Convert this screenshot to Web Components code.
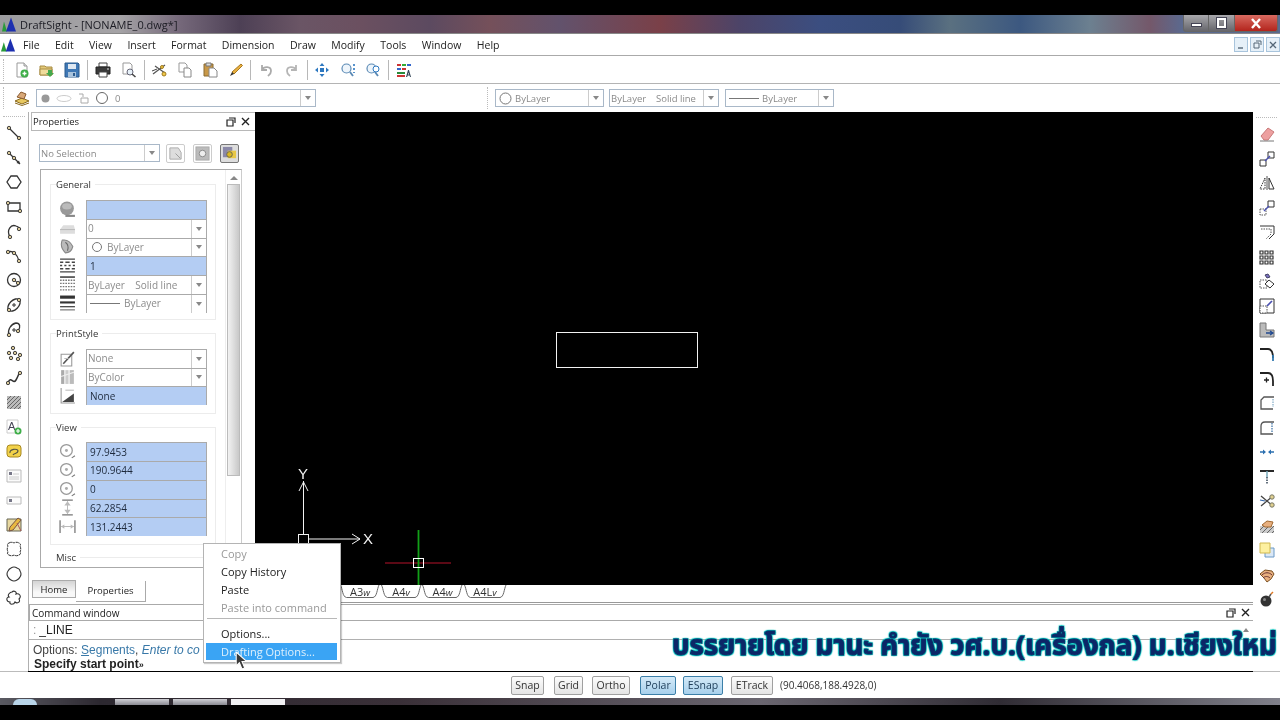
<!DOCTYPE html>
<html>
<head>
<meta charset="utf-8">
<title>DraftSight</title>
<style>
  html, body { margin: 0; padding: 0; background: #000; width: 1280px; height: 720px; overflow: hidden; }
  body { font-family: "Open Sans", "Noto Sans", sans-serif; font-size: 11px; }
</style>
</head>
<body>
<ds-app></ds-app>
<script>
const N = (x, y, c) => `<circle cx="${x}" cy="${y}" r="1.7" fill="${c || '#d8c89a'}" stroke="#333" stroke-width=".9"/>`;
const ICONS = {
  /* top toolbar */
  newdoc: `<path d="M3 1h7l3 3v11H3z" fill="#fff" stroke="#9a9a9a"/><path d="M10 1v3h3" fill="#ddd" stroke="#9a9a9a"/><circle cx="10.5" cy="11.5" r="4" fill="#3fae49"/><path d="M8.5 11.5h4M10.500 9.500v4" stroke="#fff" stroke-width="1.4"/>`,
  open: `<path d="M1 4h5l1 1h6v8H1z" fill="#e3c878" stroke="#a88d45"/><path d="M1 7h12v6H1z" fill="#f0dc9c" stroke="#a88d45"/><path d="M9 8h4v3h2l-4 4-4-4h2z" fill="#45a84d"/>`,
  save: `<path d="M1 1h13l1 1v13H1z" fill="#3f78b5" stroke="#2b5a8e"/><path d="M4 2h8v5H4z" fill="#dfe8f2"/><path d="M4 10h8v5H4z" fill="#a9c3dc"/><path d="M9 11h2v3H9z" fill="#2b5a8e"/>`,
  print: `<path d="M4 1h8v4H4z" fill="#fff" stroke="#444"/><path d="M1 5h14v7H1z" fill="#3a3a3a" stroke="#222"/><path d="M4 10h8v5H4z" fill="#fff" stroke="#444"/><path d="M12 7h2" stroke="#ddd"/>`,
  preview: `<path d="M2 1h7l2 2v9H2z" fill="#fff" stroke="#999"/><circle cx="9" cy="10" r="3" fill="#e6f0f8" stroke="#667"/><path d="M11 12l3.500 3" stroke="#444" stroke-width="1.600"/>`,
  cut: `<path d="M2 12L14 3M4 4l10 7" stroke="#555" stroke-width="1.200"/><circle cx="13" cy="12" r="2" fill="#f0c848" stroke="#a07c20"/><circle cx="11" cy="5" r="1.500" fill="#f0c848" stroke="#a07c20"/><path d="M1 9l5-2" stroke="#444"/>`,
  copy: `<path d="M2 1h6l2 2v7H2z" fill="#fff" stroke="#999"/><path d="M7 6h5l2 2v7H7z" fill="#fff" stroke="#888"/>`,
  paste: `<path d="M2 2h9v12H2z" fill="#c89848" stroke="#8a6a30"/><path d="M4 1h5v3H4z" fill="#ddd" stroke="#777"/><path d="M7 6h5l3 3v6H7z" fill="#fff" stroke="#888"/>`,
  brush: `<path d="M13 2l1.500 1.500L6 12l-2-2z" fill="#e8b040" stroke="#a87820"/><path d="M4 10l2 2-4 2z" fill="#333"/>`,
  undo: `<path d="M4 3v5h5M4 8c2-4 9-4 9 1 0 3-2 4-3 5" fill="none" stroke="#aaa" stroke-width="1.800"/>`,
  redo: `<path d="M12 3v5H7M12 8c-2-4-9-4-9 1 0 3 2 4 3 5" fill="none" stroke="#b5b5b5" stroke-width="1.800"/>`,
  pan: `<path d="M8 1l2.500 3h-5zM8 15l2.500-3h-5zM1 8l3-2.500v5zM15 8l-3-2.500v5z" fill="#2d78c0"/><path d="M6 6h4v4H6z" fill="#2d78c0"/>`,
  zoomext: `<circle cx="6.500" cy="6.500" r="4.500" fill="#eef5fb" stroke="#5b8ab5" stroke-width="1.200"/><path d="M10 10l3 4" stroke="#5b8ab5" stroke-width="1.800"/><path d="M14 2v2M14 6v2M14 10v1" stroke="#2d78c0" stroke-width="1.600"/>`,
  zoomwin: `<circle cx="6.500" cy="6.500" r="4.500" fill="#eef5fb" stroke="#5b8ab5" stroke-width="1.200"/><path d="M10 10l3 4" stroke="#5b8ab5" stroke-width="1.800"/><circle cx="11" cy="7" r="3" fill="#fff" stroke="#2d78c0"/>`,
  chart: `<path d="M1 2h4v2H1z" fill="#c33"/><path d="M6 2h4v2H6z" fill="#3a3"/><path d="M11 2h4v2h-4z" fill="#36c"/><path d="M1 6h4v2H1z" fill="#36c"/><path d="M6 6h4v2H6z" fill="#c33"/><path d="M1 10h8v2H1z" fill="#2a8a3a"/><path d="M1 13h8v2H1z" fill="#c33"/><path d="M12 8l-2 7h1.200l.4-1.500h2l.4 1.500H15l-2-7zm0 4.500l.6-2 .6 2z" fill="#345"/>`,
  layer: `<path d="M1 11l7-3 7 3-7 3z" fill="#e8c860" stroke="#8a6a20"/><path d="M1 13l7 2.500 7-2.500" fill="none" stroke="#8a6a20"/><path d="M3 7l4-5 5 2-2 5z" fill="#d8a878" stroke="#8a5a30"/>`,
  /* left toolbar */
  line: `<path d="M3 3l10 10" stroke="#333" stroke-width="1.300"/>${N(3, 3)}${N(13, 13)}`,
  pline: `<path d="M2 2l12 12" stroke="#333" stroke-width="1.300"/><path d="M14 14l-3.500-1 2.500-2.500z" fill="#333"/>${N(3, 3)}${N(8, 8)}`,
  hex: `<path d="M5 2h6l4 6-4 6H5L1 8z" fill="#fff" stroke="#333" stroke-width="1.300"/>`,
  rect: `<path d="M2 4h12v8H2z" fill="#fff" stroke="#333" stroke-width="1.300"/>${N(2, 4)}${N(14, 12)}`,
  arc: `<path d="M4 14C0 7 5 1 10 3c3 1 4 3 4 4" fill="none" stroke="#333" stroke-width="1.300"/>${N(4, 14)}${N(13, 6)}`,
  arc2: `<path d="M2 4c5-2 9 2 11 9" fill="none" stroke="#333" stroke-width="1.300"/>${N(2, 4)}${N(8, 5)}${N(13, 13)}`,
  circle: `<circle cx="8" cy="8" r="6.500" fill="#fff" stroke="#333" stroke-width="1.300"/><path d="M8 8l4 3" stroke="#333"/>${N(8, 8)}${N(12, 11)}`,
  ellipse: `<ellipse cx="8" cy="8" rx="7.500" ry="4.500" transform="rotate(-45 8 8)" fill="#fff" stroke="#333" stroke-width="1.300"/><path d="M6 8h4M8 6v4" stroke="#333"/>${N(13, 3)}${N(3, 13)}`,
  ellarc: `<path d="M3 14C1 9 5 3 10 2c4 0 5 4 2 8" fill="none" stroke="#333" stroke-width="1.300"/><path d="M6 9h4M8 7v4" stroke="#333"/>${N(3, 14)}${N(12, 10)}`,
  points: `${N(7, 3)}${N(3, 8)}${N(9, 8)}${N(14, 10)}${N(5, 13)}${N(12, 14)}`,
  spline: `<path d="M2 13c3-8 5 2 8-3s2-6 4-7" fill="none" stroke="#333" stroke-width="1.500"/>${N(2, 13)}${N(14, 3)}`,
  hatch: `<path d="M1 2h14v13H1z" fill="#bbb"/><path d="M1 6l4-4M1 10l8-8M1 14L13 2M4 15L15 4M8 15l7-7M12 15l3-3" stroke="#666"/>`,
  textadd: `<path d="M1 1h11v13H1z" fill="#fff" stroke="#ccc"/><text x="2" y="11" font-family="Liberation Sans" font-size="11" fill="#445">A</text><circle cx="12" cy="12" r="3.500" fill="#3fae49"/><path d="M10 12h4M12 10v4" stroke="#fff" stroke-width="1.200"/>`,
  region: `<rect x="1" y="2" width="14" height="12" rx="3" fill="#f2d24a" stroke="#a88820"/><path d="M4 10c-1-4 8-5 8-2s-4 2-5 4" fill="none" stroke="#554" stroke-width="1.200"/>`,
  note: `<path d="M1 2h14v12H1z" fill="#fbfbfb" stroke="#bbb"/><path d="M3 4h3v3H3z" fill="#778"/><path d="M7 6h6M3 9h10M3 11h10" stroke="#ccc"/>`,
  note2: `<path d="M1 5h14v7H1z" fill="#fbfbfb" stroke="#bbb"/><path d="M3 7h3v3H3z" fill="#778"/>`,
  editimg: `<path d="M1 2h14v12H1z" fill="#e8d8a0" stroke="#665"/><path d="M12 1l3 2-8 10-4 1 1-4z" fill="#e8b840" stroke="#754"/><path d="M11 6l4 8" stroke="#a55"/>`,
  cloudrect: `<path d="M3 2q2.500-1.500 5 0q2.500-1.500 5 0q2.500 1 1 3q1.500 3 0 6q1.500 2-1 3q-2.500 1.500-5 0q-2.500 1.500-5 0q-2.500-1-1-3q-1.500-3 0-6q-1.500-2 1-3z" fill="#fff" stroke="#333" stroke-dasharray="3 .6"/>`,
  cloudcirc: `<path d="M5 2q3-2 6 0q3 1 3 3q2 3 0 6q-1 2-3 3q-3 2-6 0q-2-1-3-3q-2-3 0-6q1-2 3-3z" fill="#fff" stroke="#333" stroke-width="1.100"/>`,
  cloud: `<path d="M6 2c2-2 5 0 4 2 3-1 6 2 3 5 2 3-2 5-4 3-1 3-6 3-5 0-4 0-4-5-1-5-2-2 1-5 3-5z" fill="#fff" stroke="#333" stroke-width="1.100"/>`,
  /* right toolbar */
  eraser: `<path d="M2 10l7-8 6 4-6 8H5z" fill="#eda0a0" stroke="#c87878"/><path d="M1 15h14" stroke="#777"/>`,
  rcopy: `<path d="M1 9h6v6H1z" fill="#fff" stroke="#333"/><path d="M9 1h6v6H9z" fill="#fff" stroke="#333"/><path d="M6 10l5-5" stroke="#4a50b0" stroke-width="1.500"/>`,
  mirror: `<path d="M6 3L1 14h5z" fill="#fff" stroke="#333" stroke-dasharray="1.500 1"/><path d="M10 3l5 11h-5z" fill="#fff" stroke="#333"/><path d="M8 1v14" stroke="#555"/>`,
  move: `<path d="M1 9h6v6H1z" fill="#fff" stroke="#555" stroke-dasharray="1.500 1"/><path d="M9 1h6v6H9z" fill="#fff" stroke="#333"/><path d="M5 11l5-5" stroke="#4a50b0" stroke-width="1.500"/>`,
  offset: `<path d="M1 2h14v8l-5 5" fill="none" stroke="#333"/><path d="M2 5h10v5l-5 5" fill="none" stroke="#555" stroke-dasharray="1.500 1"/>`,
  array: `<path d="M1 2h3v3H1zM6 2h3v3H6zM11 2h3v3h-3zM1 7h3v3H1zM6 7h3v3H6zM11 7h3v3h-3zM1 12h3v3H1zM6 12h3v3H6zM11 12h3v3h-3z" fill="#fff" stroke="#333" stroke-width="1.200"/>`,
  rotate: `<path d="M1 7h7v8H1z" fill="#fff" stroke="#555" stroke-dasharray="1.500 1"/><path d="M10 7l5 4-4 4-5-4z" fill="#fff" stroke="#333"/><path d="M6 2l3-1 2 3-3 1z" fill="#7a70c0" stroke="#446"/>`,
  scale: `<path d="M1 1h14v14H1z" fill="#fff" stroke="#333"/><path d="M1 8h7v7H1z" fill="#fff" stroke="#555" stroke-dasharray="1.500 1"/><path d="M8 8l5-5" stroke="#4a50b0" stroke-width="1.700"/>`,
  stretch: `<path d="M1 1h6v7h8v7H1z" fill="#bbb" stroke="#777"/><path d="M7 11h6M11 9l3 2-3 2" fill="none" stroke="#224a90" stroke-width="1.300"/>`,
  trimline: `<path d="M1 3h8c4 0 5 3 5 9" fill="none" stroke="#222" stroke-width="1.800"/><path d="M14 9v6" stroke="#347ab0" stroke-width="1.800"/>`,
  extend: `<path d="M1 2h8c4 0 5 3 5 8" fill="none" stroke="#222" stroke-width="1.800"/><path d="M14 10v5" stroke="#222" stroke-width="1.800"/><path d="M5 9h5M7.500 6.500v5" stroke="#222" stroke-width="1.300"/>`,
  chamfer: `<path d="M15 2H5L2 5v9h12" fill="none" stroke="#555" stroke-width="1.300"/><path d="M14 4v8" stroke="#69b" stroke-dasharray="1.500 1"/>`,
  fillet: `<path d="M15 2H6C3 2 2 4 2 6v8h12" fill="none" stroke="#555" stroke-width="1.300"/><path d="M13 3v10" stroke="#47a" stroke-width="1.300" stroke-dasharray="1.500 1"/>`,
  join: `<path d="M1 8h5M15 8h-5" stroke="#2d70b0" stroke-width="1.500"/><path d="M7 8L4 5.500v5zM9 8l3-2.500v5z" fill="#2d70b0"/>`,
  tline: `<path d="M1 2h14" stroke="#111" stroke-width="1.800"/><path d="M8 2v6" stroke="#7ab" stroke-width="1.500"/><path d="M8 8v7" stroke="#345" stroke-width="1.500" stroke-dasharray="1.500 1"/>`,
  rscissor: `<path d="M2 3l12 10M2 13L14 3" stroke="#444" stroke-width="1.300"/><circle cx="13" cy="4" r="2.200" fill="#e0d090" stroke="#776"/><circle cx="13" cy="12" r="2.200" fill="#e0d090" stroke="#776"/><path d="M1 7l5 1" stroke="#36a" stroke-width="1.200"/>`,
  hatchhand: `<path d="M1 8h14v7H1z" fill="#ccc"/><path d="M1 12l4-4M3 15l7-7M8 15l7-7M13 15l2-2" stroke="#666"/><path d="M3 7l5-4 6 1-2 5H6z" fill="#e8b080" stroke="#a06830"/>`,
  squares: `<path d="M6 6h9v9H6z" fill="#dbe8f6" stroke="#6a9ac8"/><path d="M1 1h10v10H1z" fill="#fdf0a0" stroke="#d0b850"/>`,
  hand: `<path d="M1 7l5-4 7 1 2 3-3 5-4 3-3-4z" fill="#e8b080" stroke="#7a5020"/><path d="M3 8c3-3 7-3 10 0M4 11c2-2 5-2 7 0" fill="none" stroke="#633"/>`,
  bomb: `<circle cx="7" cy="10" r="5.500" fill="#333"/><circle cx="5.500" cy="8.500" r="1.500" fill="#888"/><path d="M10 6l2-3" stroke="#555" stroke-width="1.500"/><path d="M12 3l2-2" stroke="#e07820" stroke-width="1.500"/>`,
  /* properties */
  sel1: `<path d="M2 2h9l3 5v7H2z" fill="#ddd" stroke="#aaa"/><path d="M8 8l5 5" stroke="#999"/>`,
  sel2: `<rect x="1" y="1" width="14" height="14" fill="#bbb" stroke="#aaa"/><circle cx="8" cy="8" r="3.500" fill="#eee" stroke="#888"/>`,
  sel3: `<path d="M1 1h10v11H1z" fill="#8a88a8"/><path d="M6 5h9v8H6z" fill="#e8c848"/><circle cx="8" cy="9" r="3" fill="#dcb820" stroke="#665"/>`,
  color: `<circle cx="7.500" cy="7" r="6.500" fill="#999"/><ellipse cx="7.500" cy="5" rx="4.500" ry="3" fill="#bbb"/><path d="M6 13h9v2H6z" fill="#888"/>`,
  plane: `<path d="M1 9l3-4h10l1 4v4H1z" fill="#ddd"/><path d="M1 9h14" stroke="#bbb"/>`,
  swirl: `<path d="M3 2c5-1 8 2 10 6-1 4-4 6-7 6C3 11 1 7 3 2z" fill="#bbb" stroke="#888"/><path d="M6 4c3 2 3 5 2 8" fill="none" stroke="#666"/>`,
  scale2: `<path d="M1 2h14M1 5h3M6 5h4M12 5h3M1 8h2M5 8h2M9 8h2M13 8h2M1 11h3M6 11h4M12 11h3M1 14h14" stroke="#444" stroke-width="1.300"/>`,
  ltype: `<path d="M1 1h14" stroke="#444" stroke-width="1.500"/><path d="M1 4h14M1 7h14M1 10h14M1 13h14" stroke="#777" stroke-dasharray="1.500 1" stroke-width="1.200"/>`,
  lweight: `<path d="M1 2h14" stroke="#333" stroke-width="3"/><path d="M1 7h14" stroke="#333" stroke-width="2"/><path d="M1 11h14" stroke="#444" stroke-width="1.200"/><path d="M1 14h14" stroke="#666"/>`,
  pnone: `<path d="M2 4h10v11H2z" fill="#fff" stroke="#999"/><path d="M4 13L14 2" stroke="#555" stroke-width="1.500"/><path d="M5 8h4" stroke="#bbb"/>`,
  pcolor: `<path d="M2 2h3v13H2z" fill="#aaa"/><path d="M6 2h3v13H6z" fill="#ccc"/><path d="M10 2h4v13h-4z" fill="#bbb"/><path d="M2 8l12-4" stroke="#eee"/>`,
  pramp: `<path d="M2 1v14h13" fill="none" stroke="#999"/><path d="M3 14l11-8v8z" fill="#444"/><path d="M6 3l8 0" stroke="#bbb"/>`,
  vx: `<circle cx="7" cy="7" r="5.500" fill="#fff" stroke="#999" stroke-width="1.200"/><circle cx="7" cy="7" r="1.400" fill="#aaa"/><path d="M12 14l3-2" stroke="#777"/>`,
  vh: `<path d="M3 1h10M3 15h10" stroke="#777" stroke-width="1.200"/><path d="M8 2v12" stroke="#bbb"/><path d="M8 2l-3 4h6zM8 14l-3-4h6z" fill="#bbb"/>`,
  vw: `<path d="M1 2v12M15 2v12" stroke="#777" stroke-width="1.200"/><path d="M2 8h12" stroke="#bbb"/><path d="M2 8l3-2v4zM14 8l-3-2v4z" fill="#bbb"/>`
};

class DsIcon extends HTMLElement {
  constructor() {
    super();
    this.attachShadow({ mode: "open" });
  }
  connectedCallback() {
    const s = this.getAttribute("size") || 16;
    this.shadowRoot.innerHTML = `
      <style>
        :host { display: inline-flex; align-items: center; justify-content: center; }
        svg { display: block; }
      </style>
      <svg width="${s}" height="${s}" viewBox="0 0 16 16">${ICONS[this.getAttribute("name")] || ""}</svg>
    `;
  }
}
customElements.define("ds-icon", DsIcon);

class DsTitle extends HTMLElement {
  constructor() {
    super();
    this.attachShadow({ mode: "open" });
  }
  connectedCallback() {
    this.shadowRoot.innerHTML = `
      <style>
        :host {
          display: flex; align-items: center; height: 19px; box-sizing: border-box;
          background: linear-gradient(90deg, #9c9c9f 0, #a5a3a6 120px, #75687a 180px, #4d4055 240px, #6a5565 300px, #6b5060 360px, #5c4a60 430px, #75505a 490px, #62526c 560px, #7a4048 660px, #4c4468 740px, #3b4e80 820px, #364c78 900px, #5a7080 950px, #3c5880 1020px, #6c8090 1090px, #74586a 1150px, #5a6a90 1184px);
          border-bottom: 1px solid #888;
          color: #222; font-size: 11px;
        }
        .logo { margin: 0 3px 0 1px; }
        .name { flex: 1; color: #1c1c24; }
        .wb { display: flex; height: 17px; align-self: flex-start; margin-right: 2px; }
        .wb div { display: flex; align-items: center; justify-content: center; height: 17px; border: 1px solid #666; border-top: 0; box-sizing: border-box; background: linear-gradient(#a8a8ac, #66666c); }
        .min { width: 26px; border-radius: 0 0 0 3px; }
        .max { width: 26px; border-left: 0 !important; }
        .cls { width: 43px; border-left: 0 !important; background: linear-gradient(#d86a60, #b3241c) !important; border-radius: 0 0 3px 0; }
        .min i { display: block; width: 9px; height: 2px; background: #fff; border: 1px solid #445; box-sizing: content-box; margin-top: 4px; }
        .max i { display: block; width: 5px; height: 6px; border: 2px solid #fff; outline: 1px solid #445; }
        .cls svg { display: block; }
      </style>
      <svg class="logo" width="16" height="17" viewBox="0 0 16 16"><path d="M1 15L3 5l3 10z" fill="#2a9a3a"/><path d="M5 15l5-14 5 14z" fill="#1c2fb0"/></svg>
      <span class="name"><slot></slot></span>
      <div class="wb">
        <div class="min"><i></i></div>
        <div class="max"><i></i></div>
        <div class="cls"><svg width="12" height="11" viewBox="0 0 12 11"><path d="M2 1l8 9M10 1l-8 9" stroke="#fff" stroke-width="2.400"/></svg></div>
      </div>
    `;
  }
}
customElements.define("ds-title", DsTitle);

class DsMenubar extends HTMLElement {
  constructor() {
    super();
    this.attachShadow({ mode: "open" });
  }
  connectedCallback() {
    const items = ["File", "Edit", "View", "Insert", "Format", "Dimension", "Draw", "Modify", "Tools", "Window", "Help"];
    this.shadowRoot.innerHTML = `
      <style>
        :host {
          display: flex; align-items: center; height: 22px; box-sizing: border-box;
          background: #fff; border-bottom: 1px solid #aaa; color: #222; font-size: 10.500px;
        }
        .logo { margin: 0 7px 0 1px; }
        .items { display: flex; gap: 15.400px; flex: 1; }
        .mdi { display: flex; gap: 2px; align-self: flex-start; margin-top: 3px; }
        .mdi div { display: flex; align-items: center; justify-content: center; width: 14px; height: 15px; background: #e6f0f8; border: 1px solid #a8c4dc; box-sizing: border-box; }
      </style>
      <svg class="logo" width="15" height="16" viewBox="0 0 16 16"><path d="M0 15L3 5l3 10z" fill="#2a9a3a"/><path d="M5 15l5-14 5 14z" fill="#1c2fb0"/></svg>
      <div class="items">${items.map(m => `<span>${m}</span>`).join("")}</div>
      <div class="mdi">
        <div><svg width="8" height="8" viewBox="0 0 8 8"><path d="M1 7h5" stroke="#567" stroke-width="1.400"/></svg></div>
        <div><svg width="9" height="9" viewBox="0 0 9 9"><path d="M3 1h5v4M1 3h5v5H1z" fill="none" stroke="#567"/></svg></div>
        <div><svg width="8" height="8" viewBox="0 0 8 8"><path d="M1 1l6 6M7 1L1 7" stroke="#567" stroke-width="1.300"/></svg></div>
      </div>
    `;
  }
}
customElements.define("ds-menubar", DsMenubar);

class DsToolbar extends HTMLElement {
  constructor() {
    super();
    this.attachShadow({ mode: "open" });
  }
  connectedCallback() {
    const groups = this.getAttribute("icons").split("|").map(g => g.split(","));
    this.shadowRoot.innerHTML = `
      <style>
        :host {
          display: flex; align-items: center; height: 28px; box-sizing: border-box; padding-left: 3px;
          background: #fff; border-bottom: 1px solid #b4b4b4;
        }
        .grip { width: 1px; height: 22px; border-left: 1px dotted #bbb; margin-right: 4px; }
        .b { width: 25.400px; display: flex; justify-content: center; }
        .sep { width: 1px; height: 20px; background: #b8b8b8; margin: 0 2.200px; }
      </style>
      <div class="grip"></div>
      ${groups.map(g => g.map(i => `<div class="b"><ds-icon name="${i}"></ds-icon></div>`).join("")).join(`<div class="sep"></div>`)}
    `;
  }
}
customElements.define("ds-toolbar", DsToolbar);

class DsCombo extends HTMLElement {
  constructor() {
    super();
    this.attachShadow({ mode: "open" });
  }
  connectedCallback() {
    this.shadowRoot.innerHTML = `
      <style>
        :host {
          display: flex; align-items: center; box-sizing: border-box; height: 18px;
          background: #fff; border: 1px solid #a9b8c8; color: #8a8a8a; font-size: 9.500px; white-space: nowrap; overflow: hidden;
        }
        .v { flex: 1; display: flex; align-items: center; gap: var(--g, 5px); padding-left: var(--p, 3px); overflow: hidden; }
        .a { width: 14px; align-self: stretch; border-left: 1px solid #ccc; display: flex; align-items: center; justify-content: center; }
        .a i { width: 0; height: 0; border: 3.500px solid transparent; border-top: 4px solid #888; border-bottom: 0; }
      </style>
      <div class="v"><slot></slot></div>
      <div class="a"><i></i></div>
    `;
  }
}
customElements.define("ds-combo", DsCombo);

class DsRow extends HTMLElement {
  constructor() {
    super();
    this.attachShadow({ mode: "open" });
  }
  connectedCallback() {
    const blue = this.hasAttribute("blue");
    this.shadowRoot.innerHTML = `
      <style>
        :host { display: flex; align-items: center; height: 18.800px; gap: 10px; padding-left: 7px; font-size: 10px; }
        .ic { width: 18px; display: flex; justify-content: center; }
        .f {
          width: 121px; height: 100%; box-sizing: border-box; display: flex; align-items: center;
          border: 1px solid #aaa; border-width: 1px 1px 0 1px; overflow: hidden; white-space: nowrap;
        }
        .f.blue { background: #b4cdf3; color: #1e2a3c; padding-left: 3px; }
        .f.white { background: #fff; color: #8c8c8c; padding-left: 1px; }
        .t { flex: 1; display: flex; align-items: center; gap: 4px; padding-bottom: 1px; }
        .a { width: 14px; align-self: stretch; border-left: 1px solid #ccc; display: flex; align-items: center; justify-content: center; }
        .a i { width: 0; height: 0; border: 3.500px solid transparent; border-top: 4px solid #888; border-bottom: 0; }
      </style>
      <div class="ic"><ds-icon name="${this.getAttribute("icon")}" size="17"></ds-icon></div>
      <div class="f ${blue ? "blue" : "white"}">
        <div class="t"><slot></slot></div>
        ${blue ? "" : `<div class="a"><i></i></div>`}
      </div>
    `;
  }
}
customElements.define("ds-row", DsRow);

class DsGroup extends HTMLElement {
  constructor() {
    super();
    this.attachShadow({ mode: "open" });
  }
  connectedCallback() {
    this.shadowRoot.innerHTML = `
      <style>
        :host {
          display: block; position: relative; box-sizing: border-box; width: 166px; margin-left: 9px;
          border: 1px solid #ececec; padding: 15px 0 7px;
        }
        .l { position: absolute; left: 5px; top: -7px; background: #fff; padding-right: 4px; font-size: 9.500px; line-height: 14px; color: #333; }
      </style>
      <span class="l">${this.getAttribute("label")}</span>
      <slot></slot>
    `;
  }
}
customElements.define("ds-group", DsGroup);

class DsProps extends HTMLElement {
  constructor() {
    super();
    this.attachShadow({ mode: "open" });
  }
  connectedCallback() {
    this.shadowRoot.innerHTML = `
      <style>
        :host { display: flex; flex-direction: column; height: 491px; box-sizing: border-box; background: #fff; border-left: 1px solid #b0b0b0; color: #222; }
        .head {
          display: flex; align-items: center; height: 19px; box-sizing: border-box; margin: 0 0 0 2px;
          border: 1px solid #b8b8b8; border-width: 1px 0 1px 1px; font-size: 9.500px; padding: 0 5px 0 1px;
        }
        .head span { flex: 1; }
        .head svg { margin-left: 5px; }
        .sel { display: flex; align-items: center; height: 18px; margin: 13px 0 7px 10px; }
        .sel ds-combo { width: 121px; margin-right: 6px; --p: 1px; }
        .tb { width: 19px; height: 19px; box-sizing: border-box; border: 1px solid #ccc; border-radius: 2px; margin-right: 8px; display: flex; align-items: center; justify-content: center; }
        .tb.on { background: #ddd; border-color: #777; }
        .box {
          display: flex; height: 399px; width: 202px; box-sizing: border-box; margin-left: 11px;
          border: 1px solid #aaa; border-right-color: #ccc; overflow: hidden;
        }
        .content { width: 185px; padding-top: 14px; display: flex; flex-direction: column; gap: 13px; }
        .sb { width: 15px; background: #fff; border-left: 1px solid #eee; display: flex; flex-direction: column; align-items: center; }
        .sb i { margin: 6px 0 4px; width: 0; height: 0; border: 4px solid transparent; border-bottom: 4px solid #888; border-top: 0; }
        .sb b { display: block; width: 13px; height: 292px; box-sizing: border-box; background: linear-gradient(90deg, #f2f2f2, #c8c8c8); border: 1px solid #bbb; }
        .misc { margin: -8px 0 0 9px; font-size: 9.500px; color: #333; height: 14px; display: flex; align-items: center; gap: 4px; padding-left: 6px; }
        .misc::after { content: ""; flex: 1; border-top: 1px solid #ececec; }
        .tabs { display: flex; margin: 12px 0 0 3px; height: 22px; align-items: flex-start; border-bottom: 0; }
        .tab { box-sizing: border-box; font-size: 9.500px; display: flex; align-items: center; justify-content: center; }
        .tab.home { width: 44px; height: 18px; border: 1px solid #aaa; background: linear-gradient(#d4d4d4, #f8f8f8 70%); }
        .tab.prop { width: 70px; height: 21px; border: 1px solid #aaa; border-width: 0 1px 1px 0; background: #fff; margin-top: 1px; padding-bottom: 2px; }
      </style>
      <div class="head">
        <span>Properties</span>
        <svg width="10" height="10" viewBox="0 0 10 10"><path d="M3 1h6v5M1 3h6v6H1z" fill="none" stroke="#222" stroke-width="1.200"/></svg>
        <svg width="9" height="9" viewBox="0 0 9 9"><path d="M1 1l7 7M8 1L1 8" stroke="#222" stroke-width="1.400"/></svg>
      </div>
      <div class="sel">
        <ds-combo>No Selection</ds-combo>
        <div class="tb"><ds-icon name="sel1" size="15"></ds-icon></div>
        <div class="tb"><ds-icon name="sel2" size="15"></ds-icon></div>
        <div class="tb on"><ds-icon name="sel3" size="15"></ds-icon></div>
      </div>
      <div class="box">
        <div class="content">
          <ds-group label="General" style="padding-bottom:6px">
            <ds-row blue icon="color"></ds-row>
            <ds-row icon="plane">0</ds-row>
            <ds-row icon="swirl"><svg width="12" height="12" style="margin-left:3px"><circle cx="6" cy="6" r="4.500" fill="none" stroke="#777"/></svg>ByLayer</ds-row>
            <ds-row blue icon="scale2">1</ds-row>
            <ds-row icon="ltype">ByLayer&nbsp;&nbsp;&nbsp;&nbsp;Solid line</ds-row>
            <ds-row icon="lweight"><span style="display:inline-block;width:30px;border-top:1px solid #777;margin-left:2px"></span>ByLayer</ds-row>
          </ds-group>
          <ds-group label="PrintStyle" style="padding-bottom:8px">
            <ds-row icon="pnone">None</ds-row>
            <ds-row icon="pcolor">ByColor</ds-row>
            <ds-row blue icon="pramp">None</ds-row>
          </ds-group>
          <ds-group label="View" style="padding:14px 0 8px">
            <ds-row blue icon="vx">97.9453</ds-row>
            <ds-row blue icon="vx">190.9644</ds-row>
            <ds-row blue icon="vx">0</ds-row>
            <ds-row blue icon="vh">62.2854</ds-row>
            <ds-row blue icon="vw">131.2443</ds-row>
          </ds-group>
          <div class="misc">Misc</div>
        </div>
        <div class="sb"><i></i><b></b></div>
      </div>
      <div class="tabs">
        <div class="tab home">Home</div>
        <div class="tab prop">Properties</div>
      </div>
    `;
  }
}
customElements.define("ds-props", DsProps);

class DsVbar extends HTMLElement {
  constructor() {
    super();
    this.attachShadow({ mode: "open" });
  }
  connectedCallback() {
    this.shadowRoot.innerHTML = `
      <style>
        :host { display: block; background: #fff; box-sizing: border-box; height: 560px; border-bottom: 1px solid #bbb; padding-top: ${this.getAttribute("top") || 9}px; }
        .g { border-top: 1px dotted #bbb; margin: -4px 3px 4px; }
        .b { height: 24.470px; display: flex; align-items: center; justify-content: center; }
      </style>
      <div class="g"></div>
      ${this.getAttribute("icons").split(",").map(i => `<div class="b"><ds-icon name="${i}"></ds-icon></div>`).join("")}
    `;
  }
}
customElements.define("ds-vbar", DsVbar);

class DsCanvas extends HTMLElement {
  constructor() {
    super();
    this.attachShadow({ mode: "open" });
  }
  connectedCallback() {
    const w = "#f2f2f2";
    this.shadowRoot.innerHTML = `
      <style>
        :host { display: block; background: #000; height: 473px; overflow: hidden; }
        svg { display: block; }
        text { font-family: "Liberation Sans", sans-serif; fill: ${w}; }
      </style>
      <svg width="998" height="473" viewBox="255 112 998 473">
        <rect x="556.500" y="332.500" width="141" height="35" fill="none" stroke="${w}"/>
        <path d="M303.500 534V481M299 491l4.500-9 4.500 9M309 539H360M352 534l8 5-8 5" fill="none" stroke="${w}"/>
        <rect x="298.500" y="534.500" width="10" height="10" fill="none" stroke="${w}"/>
        <text x="298" y="479" font-size="15" font-weight="100">Y</text>
        <text x="363" y="544" font-size="15" font-weight="100">X</text>
        <path d="M385 563h66" stroke="#7a0c1c" stroke-width="1.500"/>
        <path d="M418.500 530v55" stroke="#12a018" stroke-width="1.800"/>
        <rect x="413.500" y="558.500" width="10" height="9" fill="none" stroke="#fff"/>
      </svg>
    `;
  }
}
customElements.define("ds-canvas", DsCanvas);

class DsSheets extends HTMLElement {
  constructor() {
    super();
    this.attachShadow({ mode: "open" });
  }
  connectedCallback() {
    const tabs = [["A3", "w", 40], ["A4", "v", 41], ["A4", "w", 41], ["A4L", "v", 43]];
    this.shadowRoot.innerHTML = `
      <style>
        :host { display: flex; gap: .5px; height: 18px; box-sizing: border-box; background: #fff; border-bottom: 1px solid #999; padding-left: 85px; }
        .t { position: relative; height: 13px; display: flex; align-items: center; justify-content: center; font-size: 11px; color: #333; }
        .t svg { position: absolute; left: 0; top: 0; }
        .t span { position: relative; }
        .t i { font-size: 9.500px; }
      </style>
      ${tabs.map(t => `<div class="t" style="width:${t[2]}px">
        <svg width="${t[2]}" height="13"><path d="M0.500 0c2 4 2 12 6 12.500H${t[2] - 7}c4-.5 4-8.500 6-12.500" fill="none" stroke="#666"/></svg>
        <span>${t[0]}<i>${t[1]}</i></span></div>`).join("")}
    `;
  }
}
customElements.define("ds-sheets", DsSheets);

class DsCmd extends HTMLElement {
  constructor() {
    super();
    this.attachShadow({ mode: "open" });
  }
  connectedCallback() {
    this.shadowRoot.innerHTML = `
      <style>
        :host { display: block; height: 68px; box-sizing: border-box; background: #fff; border-left: 1px solid #b0b0b0; padding-top: 1px; color: #222; overflow: hidden; }
        .h { display: flex; align-items: center; height: 17px; box-sizing: border-box; border: 1px solid #aaa; border-width: 1px 0 1px 1px; font-size: 10px; padding: 0 3px 0 2px; }
        .h span { flex: 1; }
        .h svg { margin-left: 5px; }
        .in { display: flex; align-items: center; height: 19px; box-sizing: border-box; border-bottom: 1px solid #b0b0b0; font: 12px "Liberation Sans", sans-serif; padding: 0 4px; }
        .in span { flex: 1; }
        .in b { color: #999; font-weight: normal; margin-right: 3px; }
        .in i { width: 0; height: 0; border: 3px solid transparent; border-bottom: 4px solid #888; border-top: 0; }
        .o { font: 12px/14px "Liberation Sans", sans-serif; color: #444; padding: 3px 0 0 4px; white-space: nowrap; }
        .o u, .o em { color: #3878a8; }
        .o a { color: #3878a8; }
        .s { font: bold 12px/14px "Liberation Sans", sans-serif; color: #222; padding-left: 5px; white-space: nowrap; }
        .s small { font-size: 9px; }
      </style>
      <div class="h">
        <span>Command window</span>
        <svg width="10" height="10" viewBox="0 0 10 10"><path d="M3 1h6v5M1 3h6v6H1z" fill="none" stroke="#222" stroke-width="1.200"/></svg>
        <svg width="9" height="9" viewBox="0 0 9 9"><path d="M1 1l7 7M8 1L1 8" stroke="#222" stroke-width="1.400"/></svg>
      </div>
      <div class="in"><span><b>:</b>_LINE</span><i></i></div>
      <div class="o">Options: <a><u>S</u>egments</a>, <em>Enter to co</em></div>
      <div class="s">Specify start point<small>»</small></div>
    `;
  }
}
customElements.define("ds-cmd", DsCmd);

class DsBtn extends HTMLElement {
  constructor() {
    super();
    this.attachShadow({ mode: "open" });
  }
  connectedCallback() {
    this.shadowRoot.innerHTML = `
      <style>
        :host {
          display: flex; align-items: center; justify-content: center; height: 19px; box-sizing: border-box;
          border: 1px solid #a0a0a0; border-radius: 2px; font-size: 10.500px; color: #333;
          background: linear-gradient(#fdfdfd, #e4e4e4);
        }
        :host([on]) { background: linear-gradient(#d4eaf8, #a8d0ec); border-color: #3c7fa8; color: #1c3c58; }
      </style>
      <slot></slot>
    `;
  }
}
customElements.define("ds-btn", DsBtn);

class DsStatus extends HTMLElement {
  constructor() {
    super();
    this.attachShadow({ mode: "open" });
  }
  connectedCallback() {
    this.shadowRoot.innerHTML = `
      <style>
        :host { display: flex; align-items: center; height: 26px; box-sizing: border-box; background: #fff; padding-left: 511px; color: #333; font-size: 10px; }
        ds-btn:nth-of-type(1) { width: 33px; margin-right: 10px; }
        ds-btn:nth-of-type(2) { width: 29px; margin-right: 9px; }
        ds-btn:nth-of-type(3) { width: 38px; margin-right: 10px; }
        ds-btn:nth-of-type(4) { width: 36px; margin-right: 7px; }
        ds-btn:nth-of-type(5) { width: 40px; margin-right: 8px; }
        ds-btn:nth-of-type(6) { width: 42px; margin-right: 7px; }
      </style>
      <ds-btn>Snap</ds-btn><ds-btn>Grid</ds-btn><ds-btn>Ortho</ds-btn><ds-btn on>Polar</ds-btn><ds-btn on>ESnap</ds-btn><ds-btn>ETrack</ds-btn>
      <span>(90.4068,188.4928,0)</span>
    `;
  }
}
customElements.define("ds-status", DsStatus);

class DsContext extends HTMLElement {
  constructor() {
    super();
    this.attachShadow({ mode: "open" });
  }
  connectedCallback() {
    this.shadowRoot.innerHTML = `
      <style>
        :host {
          position: absolute; left: 203px; top: 543px; width: 138px; height: 120px; box-sizing: border-box;
          background: #fff; border: 1px solid #b4b4b4; padding: 0 2px; font-size: 11px; color: #222; box-shadow: 1px 1px 1px rgba(0,0,0,.2);
        }
        .i { height: 18px; display: flex; align-items: center; padding-left: 15px; white-space: nowrap; }
        .off { color: #999; }
        .sep { border-top: 1px solid #b8b8b8; margin: 2px 1px 5px; }
        .hl { background: #3aa4f4; color: #dff0fc; height: 17px; margin: 1px 1px 0 0; }
      </style>
      <div class="i off">Copy</div>
      <div class="i">Copy History</div>
      <div class="i">Paste</div>
      <div class="i off">Paste into command</div>
      <div class="sep"></div>
      <div class="i">Options...</div>
      <div class="i hl">Drafting Options...</div>
    `;
  }
}
customElements.define("ds-context", DsContext);

class DsApp extends HTMLElement {
  constructor() {
    super();
    this.attachShadow({ mode: "open" });
  }
  connectedCallback() {
    this.shadowRoot.innerHTML = `
      <style>
        :host { display: block; position: relative; width: 1280px; height: 720px; background: #000; overflow: hidden; padding-top: 15px; box-sizing: border-box; filter: blur(.3px); }
        .tb2 { display: flex; align-items: center; height: 28px; box-sizing: border-box; padding-left: 3px; background: #fff; border-bottom: 0; }
        .tb2 .grip { width: 1px; height: 22px; border-left: 1px dotted #bbb; }
        .tb2 ds-icon { margin: 0 6px 0 9px; }
        .grip2 { margin-left: 171px; margin-right: 6px; }
        .main { display: grid; grid-template-columns: 28px 1fr 27px; height: 560px; }
        .mid { display: flex; flex-direction: column; }
        .top { display: flex; height: 491px; }
        .right { flex: 1; display: flex; flex-direction: column; }
        .task {
          height: 7px; position: relative; display: flex; gap: 4px; padding-left: 115px;
          background: linear-gradient(90deg, #5a5a62, #2c2830 100px, #3a3038 400px, #6a6670 760px, #302c34 1000px, #80808a 1280px);
        }
        .task i { width: 54px; height: 6px; margin-top: 1px; background: linear-gradient(#cfcfd4, #8a8a92); }
        .task i:last-child { background: #f0f0f2; }
        .task b { position: absolute; left: 13px; top: 1px; width: 24px; height: 6px; border-radius: 12px 12px 0 0; background: #b8d4e8; }
        .thai {
          position: absolute; left: 672px; top: 626px; white-space: nowrap; font: bold 27.600px "Noto Sans Thai", "Noto Sans", "DejaVu Sans", sans-serif;
          color: #0c2668; -webkit-text-stroke: 1px #0a2f68; text-shadow: 0 0 2px #00d0c8, 1px 1px 1px #00bcb8, -1px -1px 1px #00bcb8, 1px -1px 1px #00bcb8, -1px 1px 1px #00bcb8;
        }
        .cursor { position: absolute; left: 235px; top: 651px; }
      </style>
      <ds-title>DraftSight - [NONAME_0.dwg*]</ds-title>
      <ds-menubar></ds-menubar>
      <ds-toolbar icons="newdoc,open,save|print,preview|cut,copy,paste,brush|undo,redo|pan,zoomext,zoomwin|chart"></ds-toolbar>
      <div class="tb2">
        <div class="grip"></div>
        <ds-icon name="layer"></ds-icon>
        <ds-combo style="width:280px;--g:6px;--p:4px"><svg width="9" height="9"><circle cx="4.500" cy="4.500" r="4" fill="#999"/></svg><svg width="16" height="9"><ellipse cx="8" cy="4.500" rx="7" ry="3" fill="none" stroke="#ccc"/></svg><svg width="11" height="11"><path d="M1 1h4v3M3 5h7v5H3z" fill="none" stroke="#aaa"/></svg><svg width="14" height="14"><circle cx="7" cy="7" r="5.500" fill="none" stroke="#666"/></svg>0</ds-combo>
        <div class="grip grip2"></div>
        <ds-combo style="width:109px;--g:3px"><svg width="13" height="13"><circle cx="6.500" cy="6.500" r="5.500" fill="none" stroke="#777"/></svg>ByLayer</ds-combo>
        <ds-combo style="width:110px;margin-left:5px;--p:1px">ByLayer&nbsp;&nbsp;&nbsp;&nbsp;Solid line</ds-combo>
        <ds-combo style="width:109px;margin-left:6px;--g:3px"><span style="display:inline-block;width:30px;border-top:1px solid #777"></span>ByLayer</ds-combo>
      </div>
      <div class="main">
        <ds-vbar top="8" icons="line,pline,hex,rect,arc,arc2,circle,ellipse,ellarc,points,spline,hatch,textadd,region,note,note2,editimg,cloudrect,cloudcirc,cloud"></ds-vbar>
        <div class="mid">
          <div class="top">
            <ds-props style="width:227px"></ds-props>
            <div class="right">
              <ds-canvas></ds-canvas>
              <ds-sheets></ds-sheets>
            </div>
          </div>
          <ds-cmd></ds-cmd>
        </div>
        <ds-vbar top="9" icons="eraser,rcopy,mirror,move,offset,array,rotate,scale,stretch,trimline,extend,chamfer,fillet,join,tline,rscissor,hatchhand,squares,hand,bomb"></ds-vbar>
      </div>
      <ds-status></ds-status>
      <div class="task"><b></b><i></i><i></i><i></i></div>
      <ds-context></ds-context>
      <svg class="cursor" width="14" height="19" viewBox="0 0 13 18"><path d="M1 1v13l3-3 2.500 6 2.500-1-2.500-6H11z" fill="#3a3a3a" stroke="#fff"/></svg>
      <div class="thai">บรรยายโดย มานะ คำยัง วศ.บ.(เครื่องกล) ม.เชียงใหม่</div>
    `;
  }
}
customElements.define("ds-app", DsApp);
</script>
</body>
</html>
